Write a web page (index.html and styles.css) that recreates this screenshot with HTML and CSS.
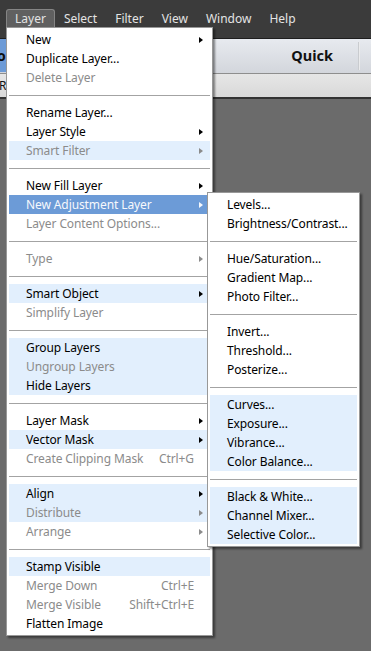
FILE: index.html
```html
<!DOCTYPE html>
<html>
<head>
<meta charset="utf-8">
<link rel="stylesheet" href="styles.css">
</head>
<body>
<div class="app">
  <nav class="menubar">
    <span class="mb-item active">Layer</span>
    <span class="mb-item">Select</span>
    <span class="mb-item">Filter</span>
    <span class="mb-item">View</span>
    <span class="mb-item">Window</span>
    <span class="mb-item">Help</span>
  </nav>
  <div class="toolbar">
    <div class="mode-btn">Editor</div>
    <div class="quick">Quick</div>
    <div class="tb-divider"></div>
  </div>
  <div class="subbar"><span class="sub-text">R</span></div>
  <div class="workspace"></div>
</div>

<div class="menu main-menu">
  <div class="row sub">New</div>
  <div class="row">Duplicate Layer...</div>
  <div class="row dis">Delete Layer</div>
  <div class="sep"></div>
  <div class="row">Rename Layer...</div>
  <div class="row sub">Layer Style</div>
  <div class="row sub dis hl">Smart Filter</div>
  <div class="sep"></div>
  <div class="row sub">New Fill Layer</div>
  <div class="row sub sel">New Adjustment Layer</div>
  <div class="row dis">Layer Content Options...</div>
  <div class="sep"></div>
  <div class="row sub dis">Type</div>
  <div class="sep"></div>
  <div class="row sub hl">Smart Object</div>
  <div class="row dis">Simplify Layer</div>
  <div class="sep"></div>
  <div class="row hl">Group Layers</div>
  <div class="row dis hl">Ungroup Layers</div>
  <div class="row hl">Hide Layers</div>
  <div class="sep"></div>
  <div class="row sub">Layer Mask</div>
  <div class="row sub hl">Vector Mask</div>
  <div class="row dis key-row"><span class="label">Create Clipping Mask</span><span class="key">Ctrl+G</span></div>
  <div class="sep"></div>
  <div class="row sub hl">Align</div>
  <div class="row sub dis hl">Distribute</div>
  <div class="row sub dis">Arrange</div>
  <div class="sep"></div>
  <div class="row hl">Stamp Visible</div>
  <div class="row dis key-row"><span class="label">Merge Down</span><span class="key">Ctrl+E</span></div>
  <div class="row dis key-row"><span class="label">Merge Visible</span><span class="key">Shift+Ctrl+E</span></div>
  <div class="row">Flatten Image</div>
</div>

<div class="menu submenu">
  <div class="row">Levels...</div>
  <div class="row">Brightness/Contrast...</div>
  <div class="sep"></div>
  <div class="row">Hue/Saturation...</div>
  <div class="row">Gradient Map...</div>
  <div class="row">Photo Filter...</div>
  <div class="sep"></div>
  <div class="row">Invert...</div>
  <div class="row">Threshold...</div>
  <div class="row">Posterize...</div>
  <div class="sep"></div>
  <div class="row hl">Curves...</div>
  <div class="row hl">Exposure...</div>
  <div class="row hl">Vibrance...</div>
  <div class="row hl">Color Balance...</div>
  <div class="sep"></div>
  <div class="row hl">Black &amp; White...</div>
  <div class="row hl">Channel Mixer...</div>
  <div class="row hl">Selective Color...</div>
</div>
</body>
</html>
```

FILE: styles.css
```css
* { box-sizing: border-box; }

html, body {
  margin: 0;
  padding: 0;
  height: 100%;
}

body {
  background: #6b6b6b;
  font-family: "Noto Sans", "Open Sans", sans-serif;
  overflow: hidden;
}

.app {
  display: flex;
  flex-direction: column;
  height: 651px;
}

.menubar {
  height: 39px;
  background: #3b3b3b;
  border-bottom: 1px solid #1e1e1e;
  display: flex;
  align-items: flex-start;
  padding: 9px 0 0 6px;
}

.mb-item {
  height: 19px;
  line-height: 17px;
  padding: 0 8px;
  color: #e4e4e4;
  font-size: 12px;
  border: 1px solid transparent;
  border-bottom: none;
}

.mb-item.active {
  background: #606060;
  border-color: #858585;
  border-radius: 3px 3px 0 0;
}

.toolbar {
  height: 35px;
  background: linear-gradient(#e7eaef, #d3d6dc);
  border-bottom: 1px solid #8e8e8e;
  display: flex;
  align-items: center;
}

.mode-btn {
  align-self: stretch;
  margin: 0 0 1px -30px;
  width: 60px;
  background: #6d9bd7;
  color: #0d0d0d;
  font-weight: 700;
  font-size: 14px;
  display: flex;
  align-items: center;
}

.quick {
  margin: 0 0 3px auto;
  font-weight: 700;
  font-size: 14.5px;
  color: #111;
}

.tb-divider {
  width: 2px;
  height: 28px;
  margin: 0 11px 0 25px;
  background: linear-gradient(90deg, #b9bcc1, #fafafa);
}

.subbar {
  height: 25px;
  background: linear-gradient(#e6e6e6, #d9d9d9);
  border-bottom: 2px solid #333;
  display: flex;
  align-items: center;
  font-size: 12px;
  color: #111;
}

.sub-text {
  margin-left: -1px;
}

.workspace {
  flex: 1;
  background: #6b6b6b;
}

/* Menus */
.menu {
  position: absolute;
  background: #fff;
  border: 1px solid #989898;
  padding: 2px;
  box-shadow: 2px 2px 2px rgba(0, 0, 0, 0.45);
  font-size: 12px;
  color: #000;
}

.main-menu {
  left: 6px;
  top: 27px;
  width: 207px;
}

.submenu {
  left: 207px;
  top: 192px;
  width: 153px;
}

.row {
  height: 19px;
  line-height: 19px;
  padding: 0 7px 0 17px;
  display: flex;
  align-items: center;
  white-space: nowrap;
  letter-spacing: -0.1px;
}

.row.hl { background: #e2effd; }

.row.sel {
  background: #6c9bd7;
  color: #f6f8fc;
}

.row.dis { color: #8b8b8b; }

.row.sub::after {
  content: "";
  margin-left: auto;
  width: 0;
  height: 0;
  border-left: 4px solid #000;
  border-top: 3.5px solid transparent;
  border-bottom: 3.5px solid transparent;
}

.row.sub.dis::after { border-left-color: #8b8b8b; }
.row.sub.sel::after { border-left-color: #f6f8fc; }

.row.key-row { padding-right: 16px; }
.label { flex: 1; }
.key { text-align: right; }

.sep {
  height: 1px;
  background: #a3a3a3;
  margin: 8px 0 7px;
}
```
